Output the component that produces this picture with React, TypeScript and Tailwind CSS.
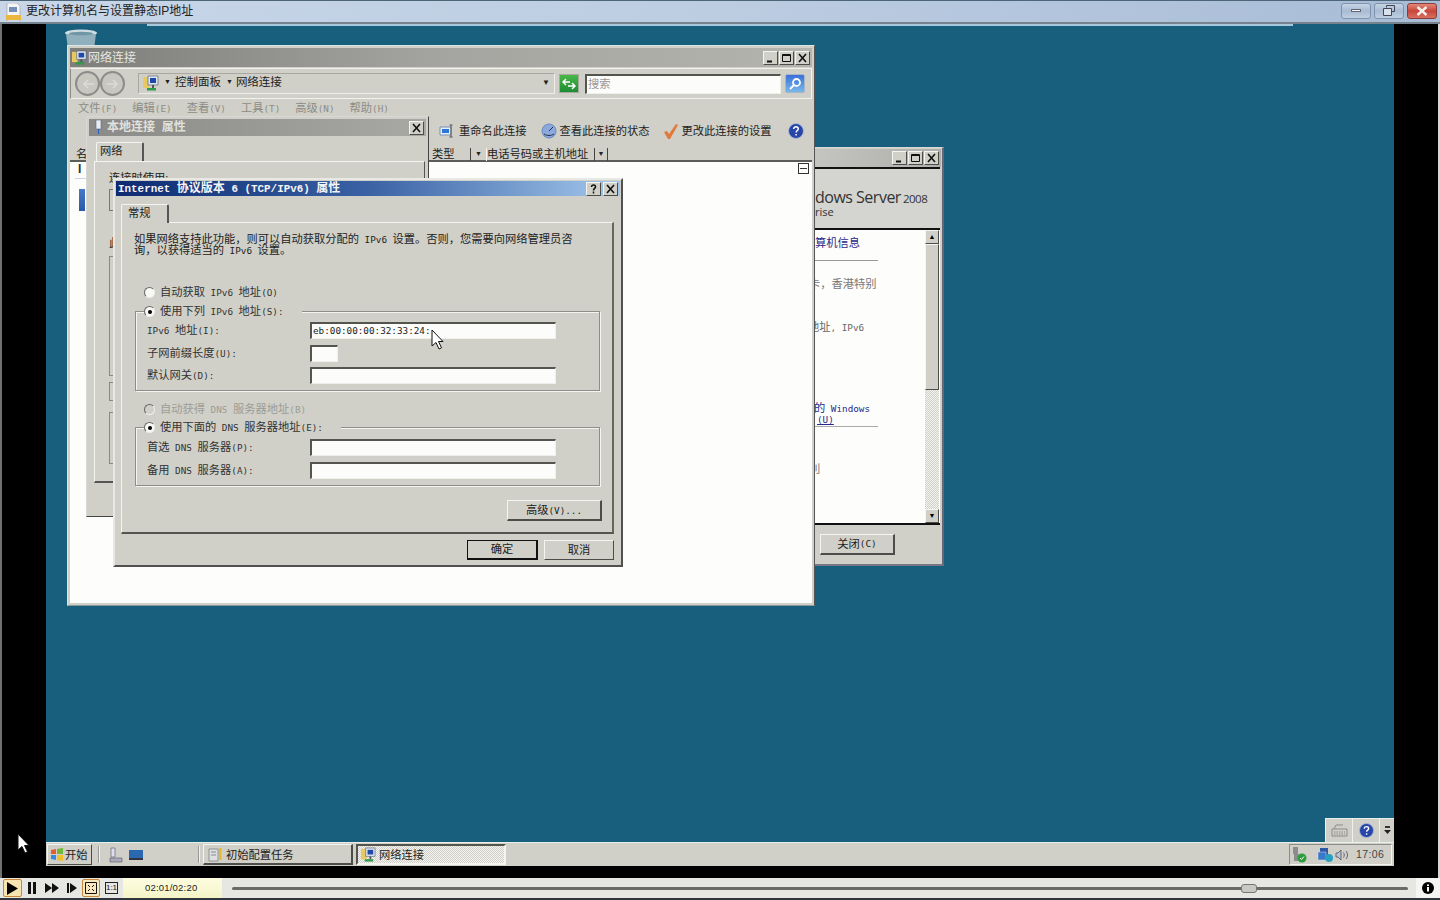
import React from "react";

const raised = "border border-t-[#f4f4f0] border-l-[#f4f4f0] border-r-[#4c4c48] border-b-[#4c4c48] bg-[#d0d0c8]";
const sunken = "border border-t-[#55554f] border-l-[#55554f] border-r-[#f0f0ea] border-b-[#f0f0ea]";
const dither = "bg-[repeating-conic-gradient(#f4f4f0_0_25%,#cfcfc8_0_50%)] bg-size-[2px_2px]";

// latin runs are narrower than the CJK, like the bitmap font in the capture
const Txt = ({ children }: { children: string }) => (
  <>
    {children.split(/([\x20-\x7e]+)/).map((part, i) =>
      /^[\x20-\x7e]+$/.test(part) ? (
        <span key={i} className="font-['DejaVu_Sans_Mono'] text-[9.3px] whitespace-pre">{part}</span>
      ) : (
        part
      )
    )}
  </>
);

const WinBtn = ({ kind }: { kind: "min" | "max" | "close" | "help" }) => (
  <div className={`${raised} w-[15px] h-[14px] flex items-center justify-center`}>
    <svg width="11" height="10" viewBox="0 0 11 10" fill="none" stroke="#111">
      {kind === "min" && <path d="M2 8.5h5" strokeWidth="2" />}
      {kind === "max" && <path d="M1.5 1.5h8v7h-8zM1.5 2.5h8" />}
      {kind === "close" && <path d="M2 1l7 8M9 1l-7 8" strokeWidth="1.6" />}
      {kind === "help" && <path d="M3.5 3c0-3 4.500-2.500 4 0-.3 1.500-2 1.500-2 3.500M5.500 7.500v2" strokeWidth="1.500" />}
    </svg>
  </div>
);

const NetIcon = ({ size = 16 }: { size?: number }) => (
  <svg width={size} height={size} viewBox="0 0 16 16">
    <path d="M0 2h6v11H0z" fill="#e8c860" />
    <path d="M5 1h10v9H5z" fill="#dfe6f0" stroke="#44506a" strokeWidth=".6" />
    <path d="M7 3h6v5H7z" fill="#1f49a8" />
    <path d="M9 10h2v3H9z" fill="#556" />
    <path d="M4 13h9v2.500H4z" fill="#2f9a48" />
  </svg>
);

const HelpIcon = ({ size = 16 }: { size?: number }) => (
  <svg width={size} height={size} viewBox="0 0 16 16">
    <circle cx="8" cy="8" r="7.500" fill="#2846a8" stroke="#a8b8d8" />
    <path d="M5.700 6c0-3 4.800-2.800 4.600 0-.1 1.700-2.200 1.600-2.200 3.400M8.100 11v1.600" fill="none" stroke="#fff" strokeWidth="1.500" />
  </svg>
);

const Arrow = ({ cls }: { cls: string }) => (
  <svg width="13" height="21" viewBox="0 0 13 21" className={cls}>
    <path d="M1 1v16l4-3.500 3 6.500 2.500-1.200-3-6.300H12z" fill="#fff" stroke="#111" />
  </svg>
);

const Radio = ({ on, dim }: { on?: boolean; dim?: boolean }) => (
  <span className={`w-[11px] h-[11px] rounded-full border border-t-[#666] border-l-[#666] border-r-[#eee] border-b-[#eee] flex items-center justify-center shrink-0 ${dim ? "bg-[#d0d0c8]" : "bg-[#f8f8f4]"}`}>
    {on && <span className="w-[4px] h-[4px] rounded-full bg-black" />}
  </span>
);

const Input = ({ w = "w-[246px]", children }: { w?: string; children?: React.ReactNode }) => (
  <div className={`${w} h-[17px] bg-[#fcfcfa] ${sunken} border-t-2 border-l-2 flex items-center leading-none pl-[1px] text-[#222] overflow-hidden whitespace-nowrap`}>
    {children}
  </div>
);

const FieldRow = ({ label, children }: { label: string; children: React.ReactNode }) => (
  <div className="flex items-center h-[17px]">
    <span className="w-[174px] pl-[11px] text-[#333]"><Txt>{label}</Txt></span>
    {children}
  </div>
);

const Btn = ({ label, cls }: { label: string; cls: string }) => (
  <div className={`${raised} ${cls} flex items-center justify-center text-[#222]`}><Txt>{label}</Txt></div>
);

const MainWindow = () => (
  <div className="absolute left-[21px] top-[21px] w-[748px] h-[561px] bg-[#d0d0c8] border border-t-[#d8e8e4] border-l-[#d8e4e0] border-r-[#555] border-b-[#8a9a9a] p-[2px] flex flex-col">
    <div className="h-[19px] shrink-0 bg-gradient-to-r from-[#7e7e7a] via-[#a4a4a0] to-[#b4b4ae] flex items-center pl-[2px] pr-[2px] gap-[1px]">
      <NetIcon size={15} />
      <span className="text-[12px] text-[#e6e6e0] flex-1">网络连接</span>
      <WinBtn kind="min" /><WinBtn kind="max" /><WinBtn kind="close" />
    </div>
    <div className="h-[31px] mt-[1px] shrink-0 border border-[#f2f2ee] border-l-[#8c8c88] flex items-center pl-[4px]">
      <div className="flex">
        {["M14 7H4M8 3L4 7l4 4", "M2 7h10M8 3l4 4-4 4"].map((d) => (
          <div key={d} className="w-[25px] h-[25px] rounded-full border-2 border-[#8c8c88] bg-[#c8c8c0] flex items-center justify-center">
            <svg width="16" height="14" viewBox="0 0 16 14" fill="none" stroke="#dcdcd6" strokeWidth="1.500"><path d={d} /></svg>
          </div>
        ))}
      </div>
      <div className="ml-[13px] w-[417px] h-[21px] flex items-center pl-[4px] pb-[2px] border border-t-[#a8a8a0] border-l-[#a8a8a0] border-r-[#eee] border-b-[#eee] text-[11.5px] text-[#222]">
        <NetIcon />
        <span className="ml-[5px] mr-[4px] text-[7px]">▼</span>
        <span>控制面板</span>
        <span className="ml-[5px] mr-[3px] text-[7px]">▼</span>
        <span>网络连接</span>
        <span className="ml-auto mr-[4px] text-[8px]">▼</span>
      </div>
      <div className="ml-[4px] w-[20px] h-[19px] bg-gradient-to-b from-[#48b848] to-[#1c8c34] border border-[#a8a8a0] flex items-center justify-center">
        <svg width="14" height="12" viewBox="0 0 14 12" fill="none" stroke="#fff" strokeWidth="1.500"><path d="M1 4h7M4 1L1 4l3 3M13 8H6M10 5l3 3-3 3" /></svg>
      </div>
      <div className={`ml-[6px] w-[196px] h-[20px] bg-[#fcfcfa] ${sunken} border-t-2 border-l-2 flex items-center pl-[1px] text-[11.25px] text-[#999]`}>搜索</div>
      <div className="ml-[4px] w-[20px] h-[19px] rounded-[2px] bg-gradient-to-b from-[#3c70d8] to-[#78b8e8] border border-[#a8b4c8] flex items-center justify-center">
        <svg width="14" height="14" viewBox="0 0 14 14" fill="none" stroke="#fff" strokeWidth="1.800"><circle cx="8.500" cy="5.500" r="3.500" /><path d="M6 8l-4 4" /></svg>
      </div>
    </div>
    <div className="h-[17px] mt-[1px] shrink-0 flex items-center pl-[8px] gap-[15px] text-[11.25px] text-[#8c8c86]">
      {["文件(F)", "编辑(E)", "查看(V)", "工具(T)", "高级(N)", "帮助(H)"].map((m) => (
        <span key={m}><Txt>{m}</Txt></span>
      ))}
    </div>
    <div className="h-[30px] shrink-0 flex items-center pl-[369px] pb-[2px] text-[11.25px] text-[#222]">
      <svg width="16" height="14" viewBox="0 0 16 14"><path d="M1 3h11v8H1z" fill="#e8eef8" stroke="#7890b0" /><path d="M3 5h7v4H3z" fill="#2c78d8" /><path d="M12 1v12M10.500 1h3M10.500 13h3" stroke="#555" fill="none" /></svg>
      <span className="ml-[4px]">重命名此连接</span>
      <svg width="16" height="16" viewBox="0 0 16 16" className="ml-[14px]"><circle cx="8" cy="8" r="7" fill="#8ca8dc" stroke="#6888c0" /><path d="M8 8l4-4M3 11c3 2 7 2 10 0" stroke="#234" fill="none" /></svg>
      <span className="ml-[3px]">查看此连接的状态</span>
      <svg width="16" height="16" viewBox="0 0 16 16" className="ml-[13px]"><path d="M1 9l3-1 2 3 7-10 2 1-8 14H5z" fill="#e07a3c" /></svg>
      <span className="ml-[3px]">更改此连接的设置</span>
      <span className="ml-[16px] flex"><HelpIcon /></span>
    </div>
    <div className="h-[15px] shrink-0 flex items-center pl-[6px] pt-[1px] text-[11.25px] text-[#222] border-b-2 border-[#5c5c58]">
      <span className="w-[16px]">名</span>
      <span className="ml-[340px] w-[38px]">类型</span>
      <span className="w-[1px] h-[13px] bg-[#444]" />
      <span className="w-[15px] text-center text-[7px]">▼</span>
      <span className="w-[1px] h-[13px] bg-[#f4f4f0]" />
      <span className="w-[107px]">电话号码或主机地址</span>
      <span className="w-[1px] h-[13px] bg-[#444]" />
      <span className="w-[12px] text-center text-[7px]">▼</span>
      <span className="w-[1px] h-[13px] bg-[#444]" />
    </div>
    <div className="flex-1 bg-[#fdfdfb] flex justify-end items-start pt-[1px] pr-[3px]">
      <div className="w-[11px] h-[11px] border border-[#333] flex items-center justify-center">
        <span className="w-[7px] h-[1px] bg-[#333]" />
      </div>
    </div>
    <div className="absolute left-[10px] top-[114px] text-[12px] font-bold text-[#333]">I</div>
    <div className="absolute left-[7px] top-[132px] w-[12px] h-[1px] bg-[#c8d4ec]" />
    <div className="absolute left-[11px] top-[143px] w-[6px] h-[22px] bg-gradient-to-b from-[#4878c8] to-[#2858a8]" />
  </div>
);

const LocalDialog = () => (
  <div className="absolute left-[40px] top-[92px] w-[343px] h-[401px] bg-[#d0d0c8] border border-[#d8d8d4] border-r-[#444] border-b-[#444] p-[2px] flex flex-col">
    <div className="h-[17px] shrink-0 bg-gradient-to-r from-[#8a8a88] to-[#a8a8a4] flex items-center pl-[4px] pr-[2px]">
      <svg width="11" height="15" viewBox="0 0 11 15"><path d="M3 0h5v9H3z" fill="#e8eef4" stroke="#667" strokeWidth=".6" /><path d="M5 9h1v5H5z" fill="#2860c0" /></svg>
      <span className="ml-[3px] pb-[2px] flex-1 text-[12px] font-bold text-[#e0e0dc]">本地连接&nbsp;&nbsp;属性</span>
      <WinBtn kind="close" />
    </div>
    <div className="mt-[6px] ml-[7px] w-[48px] h-[19px] bg-[#d0d0c8] border border-[#f4f4f0] border-r-2 border-r-[#555] border-b-0 rounded-t-[2px] text-[11.25px] text-[#222] pl-[3px] leading-[17px]">网络</div>
    <div className="w-[331px] h-[322px] ml-[5px] border border-[#f4f4f0] border-r-[#555] border-b-2 border-b-[#555] pl-[14px] pt-[8px] text-[11.25px] text-[#222] flex flex-col">
      <span>连接时使用:</span>
      <div className="w-[10px] h-[22px] border border-[#777] mt-[2px]" />
      <span className="mt-[24px]">此</span>
      <div className="w-[10px] h-[120px] border border-[#888] mt-[4px]" />
      <div className="w-[10px] h-[19px] border border-[#888] mt-[6px]" />
      <div className="w-[10px] h-[52px] border border-[#888] mt-[11px]" />
    </div>
  </div>
);

const Group = ({ radio, h, gap, children }: { radio: React.ReactNode; h: string; gap: string; children: React.ReactNode }) => (
  <div className={`relative ml-[13px] w-[465px] ${h} border border-[#8e8e88] shadow-[1px_1px_0_#f4f4f0,inset_1px_1px_0_#f4f4f0] flex flex-col ${gap}`}>
    <div className="absolute -top-[9px] left-[8px] bg-[#d0d0c8] pr-[18px] flex items-center gap-[5px] h-[17px] text-[#333]">{radio}</div>
    {children}
  </div>
);

const Ipv6Dialog = () => (
  <div className="absolute left-[67px] top-[154px] w-[510px] h-[389px] bg-[#d0d0c8] border-2 border-t-[#e8e8e4] border-l-[#e8e8e4] border-r-[#505050] border-b-[#505050] flex flex-col text-[11.25px] leading-[11px]">
    <div className="mx-[1px] mt-[1px] h-[15px] shrink-0 bg-gradient-to-r from-[#0e2a72] via-[#3a62a4] to-[#a4c8ec] flex items-center pr-[2px] pl-[2px] gap-[2px]">
      <span className="flex-1 text-[12px] font-bold text-[#f4f4f4] whitespace-pre">
        <span className="font-['Liberation_Mono'] text-[10.9px]">Internet </span>协议版本<span className="font-['Liberation_Mono'] text-[10.9px]"> 6 (TCP/IPv6) </span>属性
      </span>
      <WinBtn kind="help" /><WinBtn kind="close" />
    </div>
    <div className="mt-[8px] ml-[6px] w-[48px] h-[19px] bg-[#d0d0c8] border border-[#f4f4f0] border-r-2 border-r-[#555] border-b-0 rounded-t-[2px] pl-[6px] pt-[3px] text-[#222] z-10">常规</div>
    <div className="w-[493px] h-[312px] ml-[6px] -mt-[1px] border border-[#f4f4f0] border-r-2 border-r-[#66665f] border-b-2 border-b-[#55554f] flex flex-col">
      <p className="mt-[11px] ml-[12px] w-[445px] text-[#222]"><Txt>如果网络支持此功能，则可以自动获取分配的 IPv6 设置。否则，您需要向网络管理员咨询，以获得适当的 IPv6 设置。</Txt></p>
      <div className="mt-[31px] ml-[22px] flex items-center gap-[5px] text-[#333] h-[11px]"><Radio /><span><Txt>自动获取 IPv6 地址(O)</Txt></span></div>
      <div className="mt-[13px]">
        <Group radio={<><Radio on /><span><Txt>使用下列 IPv6 地址(S):</Txt></span></>} h="h-[80px]" gap="pt-[10px] gap-[5.5px]">
          <FieldRow label="IPv6 地址(I):">
            <Input><Txt>eb:00:00:00:32:33:24:</Txt></Input>
          </FieldRow>
          <FieldRow label="子网前缀长度(U):"><Input w="w-[28px]" /></FieldRow>
          <FieldRow label="默认网关(D):"><Input /></FieldRow>
        </Group>
      </div>
      <div className="mt-[13px] ml-[22px] flex items-center gap-[5px] text-[#9c9c96] h-[11px]"><Radio dim /><span><Txt>自动获得 DNS 服务器地址(B)</Txt></span></div>
      <div className="mt-[12px]">
        <Group radio={<><Radio on /><span><Txt>使用下面的 DNS 服务器地址(E):</Txt></span></>} h="h-[59px]" gap="pt-[11px] gap-[6px]">
          <FieldRow label="首选 DNS 服务器(P):"><Input /></FieldRow>
          <FieldRow label="备用 DNS 服务器(A):"><Input /></FieldRow>
        </Group>
      </div>
      <div className="mt-[14px] ml-[385px]"><Btn label="高级(V)..." cls="w-[95px] h-[21px] border-r-2 border-b-2" /></div>
    </div>
    <div className="mt-[6px] ml-[352px] flex gap-[6px]">
      <div className="w-[71px] h-[20px] border border-[#111] border-r-2 border-b-2 flex items-center justify-center text-[#222]">确定</div>
      <Btn label="取消" cls="w-[70px] h-[20px]" />
    </div>
  </div>
);

// only its right part shows, the rest lies under the main window
const InfoWindow = () => (
  <div className="absolute left-[768px] top-[123px] w-[130px] h-[419px] bg-[#d0d0c8] border border-[#d8d8d4] border-r-2 border-r-[#667] border-b-2 border-b-[#778] flex flex-col text-[11.25px] pr-[1px]">
    <div className="h-[18px] mt-[1px] shrink-0 bg-gradient-to-r from-[#c4c4c0] to-[#aeaeaa] flex items-center justify-end pr-[2px] gap-[1px]">
      <WinBtn kind="min" /><WinBtn kind="max" /><WinBtn kind="close" />
    </div>
    <div className="mr-[1px] h-[63px] shrink-0 bg-[#d4d4d0] border-t-2 border-b-2 border-[#111] pt-[20px] leading-none text-[#333] font-['Open_Sans']">
      <div className="whitespace-nowrap">
        <span className="text-[16px] tracking-[-0.5px]">dows Server</span><span className="ml-[2px] text-[11.5px] tracking-[-0.5px]">2008</span>
      </div>
      <div className="text-[11px] mt-[1px]">rise</div>
    </div>
    <div className="mr-[1px] h-[295px] shrink-0 flex bg-[#fdfdfb] border-b-2 border-[#111]">
      <div className="w-[110px] relative flex flex-col leading-[11px]">
        <span className="mt-[8px] text-[#28288c] whitespace-nowrap">算机信息</span>
        <div className="mt-[11px] w-[63px] h-[1px] bg-[#999]" />
        <span className="mt-[18px] -ml-[6px] text-[#777] whitespace-nowrap">卡，香港特别</span>
        <span className="mt-[32px] -ml-[7px] text-[#666] whitespace-nowrap"><Txt>地址, IPv6</Txt></span>
        <span className="mt-[70px] -ml-[1px] text-[#28288c] whitespace-nowrap"><Txt>的 Windows</Txt></span>
        <span className="ml-[2px] text-[#28288c] font-['DejaVu_Sans_Mono'] text-[9.3px] underline">(U)</span>
        <div className="mt-[1px] w-[63px] h-[1px] bg-[#aaa]" />
        <span className="mt-[37px] -ml-[6px] text-[#777]">利</span>
      </div>
      <div className="w-[14px] flex flex-col">
        <div className={`${raised} h-[14px] flex items-center justify-center text-[7px]`}>▲</div>
        <div className={`${raised} h-[146px]`} />
        <div className={`flex-1 ${dither}`} />
        <div className={`${raised} h-[14px] flex items-center justify-center text-[7px]`}>▼</div>
      </div>
    </div>
    <div className="pt-[9px] pl-[5px]"><Btn label="关闭(C)" cls="w-[75px] h-[21px] border-r-2 border-b-2" /></div>
  </div>
);

const Taskbar = () => (
  <div className="h-[24px] shrink-0 bg-[#d0d0c8] border-t border-[#e8f0ec] flex items-center text-[11.25px] text-[#222]">
    <div className={`${raised} ml-[1px] w-[45px] h-[21px] flex items-center gap-[1px] pl-[2px]`}>
      <svg width="14" height="14" viewBox="0 0 14 14"><path d="M1 2l5-1v5H1z" fill="#e85c28" /><path d="M7 1l6-1v6H7z" fill="#70b838" /><path d="M1 7h5v5l-5-1z" fill="#3c88e0" /><path d="M7 7h6v6l-6-1z" fill="#f0c028" /></svg>
      <span className="pt-[2px]">开始</span>
    </div>
    <div className="ml-[6px] w-[2px] h-[17px] bg-[#f0f0ec] border-l border-[#999]" />
    <svg width="16" height="16" viewBox="0 0 16 16" className="ml-[8px]"><path d="M3 1h4v9H3z" fill="#dde" stroke="#667" strokeWidth=".7" /><path d="M2 11h12v4H2z" fill="#aab" stroke="#667" strokeWidth=".7" /></svg>
    <svg width="16" height="14" viewBox="0 0 16 14" className="ml-[4px]"><path d="M1 2h14v10H1z" fill="#2c68b0" /><path d="M1 10h14v2H1z" fill="#334" /></svg>
    <div className="ml-[54px] w-[2px] h-[17px] bg-[#f0f0ec] border-l border-[#999]" />
    <div className={`${raised} border-r-2 border-b-2 ml-[3px] w-[150px] h-[21px] flex items-center pl-[4px] gap-[3px]`}>
      <svg width="15" height="16" viewBox="0 0 15 16"><path d="M1 3h9v12H1z" fill="#dde0e0" stroke="#777" strokeWidth=".7" /><path d="M11 2h2.500v12H11z" fill="#e8b830" /><path d="M3 6h5M3 9h5" stroke="#889" /></svg>
      <span className="pt-[2px]">初始配置任务</span>
    </div>
    <div className={`border-2 border-t-[#55554f] border-l-[#55554f] border-r-[#f4f4f0] border-b-[#f4f4f0] ml-[3px] w-[150px] h-[21px] flex items-center pl-[3px] gap-[3px] ${dither}`}>
      <NetIcon size={15} />
      <span className="pt-[2px]">网络连接</span>
    </div>
    <div className="ml-auto mr-[2px] w-[103px] h-[21px] border border-t-[#8c8c88] border-l-[#8c8c88] border-r-[#f4f4f0] border-b-[#f4f4f0] flex items-center">
      <svg width="18" height="17" viewBox="0 0 18 17"><path d="M3 1h5v6l1 2v6H4V9L3 7z" fill="#8c8c8c" /><circle cx="12" cy="12" r="4.500" fill="#2c9c3c" /><path d="M10 12l1.500 1.500 2.500-3" stroke="#fff" fill="none" /></svg>
      <svg width="17" height="16" viewBox="0 0 17 16" className="ml-[9px]"><path d="M3 1h8v8H3z" fill="#2c58a8" /><path d="M1 5h8v8H1z" fill="#3c78c8" stroke="#dde" strokeWidth=".5" /><circle cx="12" cy="11" r="4" fill="#28a0c0" /></svg>
      <svg width="15" height="14" viewBox="0 0 15 14" className="ml-[1px]" fill="none" stroke="#667"><path d="M1 5h2l3-3v10l-3-3H1z" fill="#b8c4d0" /><path d="M8.500 4.500c1 1.500 1 3.500 0 5M11 3c2 2.500 2 5.500 0 8" /></svg>
      <span className="ml-[6px] pt-[1px] font-['Liberation_Sans'] text-[10.5px] tracking-[0.4px] text-[#444]">17:06</span>
    </div>
  </div>
);

const LangBar = () => (
  <div className="flex h-[24px] w-[69px] bg-[#d0d0c8] border-l border-[#f0f0ec] items-center shadow-[inset_0_1px_0_#e8f0ec]">
    <div className="w-[27px] flex justify-center border-r border-[#f0f0ec] h-full items-center">
      <svg width="17" height="13" viewBox="0 0 17 13" fill="none" stroke="#8c8c88"><path d="M1 5h15v7H1zM3 5l2-4h7" /><path d="M3 8h11M3 10h11" strokeDasharray="1.500 1" /></svg>
    </div>
    <div className="w-[27px] flex justify-center border-r border-[#f0f0ec] h-full items-center"><HelpIcon size={15} /></div>
    <div className="flex-1 flex flex-col items-center gap-[2px]">
      <span className="w-[5px] h-[2px] bg-[#333]" />
      <svg width="7" height="4" viewBox="0 0 7 4"><path d="M0 0h7L3.500 4z" fill="#222" /></svg>
    </div>
  </div>
);

const Desktop = () => (
  <div className="relative w-[1348px] h-[842px] bg-[#185e7d] flex flex-col">
    <div className="absolute left-[101px] top-0 w-[1146px] h-[2px] bg-[#a8c8dc]" />
    <svg width="34" height="20" viewBox="0 0 34 20" className="absolute left-[18px] top-[5px]">
      <ellipse cx="17" cy="4" rx="16" ry="3.500" fill="#cfdde2" />
      <path d="M2 5h30l-2 15H4z" fill="#8fb0bc" />
      <ellipse cx="17" cy="4.500" rx="12" ry="1.800" fill="#6e96a4" />
    </svg>
    <div className="flex-1 relative flex justify-end items-end">
      <InfoWindow />
      <MainWindow />
      <LocalDialog />
      <Ipv6Dialog />
      <Arrow cls="absolute left-[385px] top-[305px]" />
      <LangBar />
    </div>
    <Taskbar />
  </div>
);

const PlayerBar = () => (
  <div className="h-[20px] shrink-0 bg-[#e6e6e2] flex items-center">
    <div className="ml-[3px] w-[19px] h-[18px] rounded-[2px] border border-[#c88838] bg-[#f8e4b0] flex items-center justify-center">
      <svg width="13" height="13" viewBox="0 0 13 13"><path d="M1 0l11 6.500L1 13z" fill="#000" /></svg>
    </div>
    <svg width="10" height="12" viewBox="0 0 10 12" className="ml-[5px]"><path d="M1 0h3v12H1zM6 0h3v12H6z" fill="#111" /></svg>
    <svg width="14" height="10" viewBox="0 0 14 10" className="ml-[8px]"><path d="M0 0l7 5-7 5zM7 0l7 5-7 5z" fill="#111" /></svg>
    <svg width="10" height="10" viewBox="0 0 10 10" className="ml-[8px]"><path d="M0 0h2v10H0zM3 0l7 5-7 5z" fill="#111" /></svg>
    <div className="ml-[5px] w-[18px] h-[18px] rounded-[2px] border border-[#c88838] bg-[#f8e8c0] flex items-center justify-center">
      <svg width="12" height="12" viewBox="0 0 12 12" fill="none" stroke="#111"><path d="M.5.5h11v11H.5z" /><path d="M3 3l2 2M9 3L7 5M3 9l2-2M9 9L7 7" /></svg>
    </div>
    <div className="ml-[5px] w-[13px] h-[12px] border border-[#222] flex items-center justify-center text-[8px] leading-none font-['Liberation_Sans'] text-[#111]">1:1</div>
    <div className="ml-[5px] w-[99px] h-full bg-gradient-to-b from-[#fdfde0] to-[#f4f4c8] flex items-center pl-[22px] text-[9.5px] tracking-[0.2px] text-[#222] font-['Liberation_Sans']">02:01/02:20</div>
    <div className="ml-[10px] w-[1176px] h-[3px] bg-[#6a6a66] relative rounded-full">
      <div className="absolute left-[1009px] -top-[3px] w-[16px] h-[9px] rounded-[3px] bg-[#c8c8c4] border border-[#777]" />
    </div>
    <div className="ml-auto w-[24px] h-full bg-[#f4f4f2] flex items-center justify-center">
      <svg width="12" height="12" viewBox="0 0 12 12"><circle cx="6" cy="6" r="6" fill="#000" /><path d="M5 2.500h2v1.500H5zM5 5h2v4.500H5z" fill="#fff" /></svg>
    </div>
  </div>
);

export default function App() {
  return (
    <div className="relative w-[1440px] h-[900px] overflow-hidden bg-black flex flex-col font-['Liberation_Sans','Noto_Sans_CJK_SC',sans-serif]">
      <div className="h-[24px] shrink-0 bg-gradient-to-r from-[#c8d6e8] via-[#bccde2] to-[#a8bcd6] border-t border-t-[#4c6678] border-b-2 border-b-[#76838e] flex items-center pl-[5px]">
        <svg width="17" height="18" viewBox="0 0 17 18">
          <path d="M2 0h10l3 3v15H2z" fill="#f4f4f4" stroke="#99a" strokeWidth=".6" />
          <path d="M4 4h8v5H4z" fill="#7090b8" />
          <path d="M1 12h15v5H1z" fill="#e8b840" />
        </svg>
        <span className="ml-[4px] pb-[1px] text-[12px] text-[#222]">更改计算机名与设置静态IP地址</span>
        <div className="ml-auto mr-[3px] mb-[2px] flex gap-[3px]">
          <div className="w-[30px] h-[16px] rounded-[3px] border border-[#7f93ae] bg-gradient-to-b from-[#c6d4e6] via-[#a8bbd2] to-[#c0d0e2] flex items-center justify-center">
            <span className="w-[10px] h-[3px] bg-[#f0f4f8] border border-[#667]" />
          </div>
          <div className="w-[30px] h-[16px] rounded-[3px] border border-[#7f93ae] bg-gradient-to-b from-[#c6d4e6] via-[#a8bbd2] to-[#c0d0e2] flex items-center justify-center">
            <svg width="12" height="11" viewBox="0 0 12 11" fill="none" stroke="#445"><path d="M3.500 2.500v-2h8v6h-3" /><path d="M.5 3.500h8v7h-8z" fill="#d8e0ea" /></svg>
          </div>
          <div className="w-[30px] h-[16px] rounded-[3px] border border-[#8c3c38] bg-gradient-to-b from-[#e08878] via-[#c8443c] to-[#d87060] flex items-center justify-center">
            <svg width="12" height="10" viewBox="0 0 12 10" fill="none" stroke="#f4f0ea" strokeWidth="2.400"><path d="M1.500 1l9 8M10.500 1l-9 8" /></svg>
          </div>
        </div>
      </div>
      <div className="h-[854px] shrink-0 flex border-l-2 border-l-[#707070] border-r-2 border-r-[#d8d8d8]">
        <div className="ml-[44px]"><Desktop /></div>
      </div>
      <PlayerBar />
      <div className="h-[2px] bg-[#30343c]" />
      <Arrow cls="absolute left-[17px] top-[833px]" />
    </div>
  );
}
